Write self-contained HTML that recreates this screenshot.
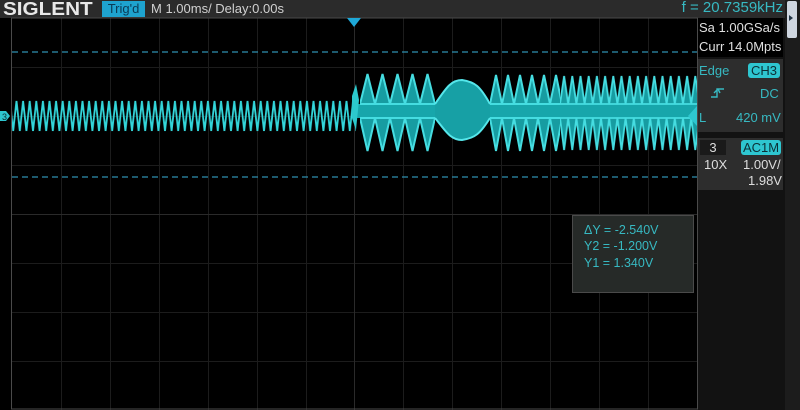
<!DOCTYPE html>
<html><head><style>
body{margin:0;width:800px;height:410px;background:#000;position:relative;overflow:hidden;font-family:"Liberation Sans",sans-serif}
div{position:absolute}
.t{white-space:nowrap}
</style></head><body>
<div style="left:0;top:0;width:800px;height:18px;background:#2b2b2b"></div>
<div class="t" style="left:3px;top:-1px;font-size:18px;font-weight:bold;color:#e8e8e8;letter-spacing:0px;transform:scaleX(1.15);transform-origin:left">SIGLENT</div>
<div class="t" style="left:102px;top:1px;width:43px;height:16px;background:#1ea3cf;color:#0a3a55;font-size:13px;line-height:16px;text-align:center">Trig'd</div>
<div class="t" style="left:151px;top:0px;font-size:13px;line-height:18px;color:#d0d0d0">M 1.00ms/ Delay:0.00s</div>
<div class="t" style="left:600px;width:183px;top:-1px;font-size:15px;line-height:18px;color:#37b9c2;text-align:right">f = 20.7359kHz</div>
<div style="left:697px;top:18px;width:103px;height:392px;background:#121212"></div>
<div style="left:785px;top:0;width:15px;height:410px;background:#1c1c1c"></div>
<div style="left:787px;top:1px;width:10px;height:37px;background:#cfd6e0;border-radius:2px"></div>
<div style="left:789px;top:15px;width:0;height:0;border-left:4px solid #234;border-top:3px solid transparent;border-bottom:3px solid transparent"></div>
<div style="left:697px;top:18px;width:86px;height:39px;background:#000"></div>
<div class="t" style="left:699px;top:20px;font-size:13px;color:#e0e0e0">Sa 1.00GSa/s</div>
<div class="t" style="left:699px;top:39px;font-size:13px;color:#e0e0e0">Curr 14.0Mpts</div>
<div style="left:697px;top:59px;width:86px;height:73px;background:#2d2d2d"></div>
<div class="t" style="left:699px;top:63px;font-size:13px;color:#37b9c2">Edge</div>
<div class="t" style="left:748px;top:63px;width:32px;height:15px;background:#2ec6d0;border-radius:3px;color:#0c3036;font-size:13px;line-height:15px;text-align:center">CH3</div>
<svg style="position:absolute;left:710px;top:86px" width="16" height="14"><path d="M1,11 H7 V3 H14 M4,7 L8,3 M8,3 L10,7" stroke="#37b9c2" stroke-width="1.4" fill="none"/></svg>
<div class="t" style="left:760px;top:86px;font-size:13px;color:#37b9c2">DC</div>
<div class="t" style="left:699px;top:110px;font-size:13px;color:#37b9c2">L</div>
<div class="t" style="left:736px;top:110px;font-size:13px;color:#37b9c2">420 mV</div>
<div style="left:697px;top:138px;width:86px;height:52px;background:#2d2d2d"></div>
<div class="t" style="left:700px;top:140px;width:26px;height:15px;background:#1a1a1a;color:#ddd;font-size:13px;line-height:15px;text-align:center">3</div>
<div class="t" style="left:741px;top:140px;width:40px;height:15px;background:#2ec6d0;border-radius:3px;color:#0c3036;font-size:13px;line-height:15px;text-align:center">AC1M</div>
<div class="t" style="left:704px;top:157px;font-size:13px;color:#ddd">10X</div>
<div class="t" style="left:743px;top:157px;font-size:13px;color:#ddd">1.00V/</div>
<div class="t" style="left:748px;top:173px;font-size:13px;color:#ddd">1.98V</div>
<svg style="position:absolute;left:0;top:0" width="800" height="410">
<defs>
<pattern id="lp" width="6.6" height="410" patternUnits="userSpaceOnUse"><path d="M0,131 L3.3,101 L6.6,131" stroke="#33d6da" stroke-width="1.8" fill="none"/></pattern>
<pattern id="p15" x="360" width="15" height="410" patternUnits="userSpaceOnUse"><path d="M0,104 L7.5,74 L15,104Z M0,118 L7.5,151 L15,118Z" fill="#179ca1" stroke="#45dde1" stroke-width="2"/></pattern>
<pattern id="p12" x="490" width="12" height="410" patternUnits="userSpaceOnUse"><path d="M0,104 L6,75 L12,104Z M0,118 L6,151 L12,118Z" fill="#179ca1" stroke="#45dde1" stroke-width="2"/></pattern>
<pattern id="p8" x="560" width="8.2" height="410" patternUnits="userSpaceOnUse"><path d="M0,104 L4.1,76 L8.2,104Z M0,118 L4.1,150 L8.2,118Z" fill="#179ca1" stroke="#45dde1" stroke-width="1.8"/></pattern>
</defs>
<g stroke="#1c1c1c" stroke-width="1">
<path d="M61.5,18V410M110.5,18V410M159.5,18V410M208.5,18V410M257.5,18V410M306.5,18V410M403.5,18V410M452.5,18V410M501.5,18V410M550.5,18V410M599.5,18V410M648.5,18V410"/>
<path d="M12,67.5H697M12,116.5H697M12,165.5H697M12,263.5H697M12,312.5H697M12,361.5H697"/>
</g>
<path d="M354.5,18V410M12,214.5H697" stroke="#2a2a2a"/>
<rect x="11.5" y="18" width="686" height="391" fill="none" stroke="#4a4a4a"/>
<rect x="12" y="98" width="344" height="36" fill="url(#lp)"/>
<rect x="356" y="104" width="341" height="14" fill="#17a6ab"/>
<rect x="360" y="70" width="75" height="85" fill="url(#p15)"/>
<path d="M435,104 C445,90 450,80 462,80 C475,82 480,86 490,104 V118 C480,134 475,138 462,140 C450,140 445,130 435,118Z" fill="#17a0a5"/>
<path d="M435,104 C445,90 450,80 462,80 C475,82 480,86 490,104 M435,118 C445,130 450,140 462,140 C475,138 480,134 490,118" stroke="#55e6ea" stroke-width="2" fill="none"/>
<rect x="490" y="70" width="70" height="85" fill="url(#p12)"/>
<rect x="560" y="70" width="137" height="85" fill="url(#p8)"/>
<path d="M352,96 L356,84 L359,100 L356,130 L352,118Z" fill="#2cc8cc"/>
<line x1="12" y1="52" x2="697" y2="52" stroke="#2f8fb0" stroke-width="1.2" stroke-dasharray="6,4"/>
<line x1="12" y1="177" x2="697" y2="177" stroke="#2f8fb0" stroke-width="1.2" stroke-dasharray="6,4"/>
<path d="M347,18 H361 L354,27Z" fill="#1ea8d8"/>
<path d="M0,111 H6 L10,116 L6,121 H0Z" fill="#2ec6d0"/>
<text x="2" y="120" font-size="9" fill="#0c3036" font-family="Liberation Sans">3</text>
<path d="M697,106 L688,116 L697,126Z" fill="#2ec6d0"/>
<rect x="572.5" y="215.5" width="121" height="77" fill="#262a28" stroke="#4a4a4a"/>
<text x="584" y="234" font-size="12.5" fill="#37b9c2" font-family="Liberation Sans">ΔY = -2.540V</text>
<text x="584" y="250" font-size="12.5" fill="#37b9c2" font-family="Liberation Sans">Y2 = -1.200V</text>
<text x="584" y="267" font-size="12.5" fill="#37b9c2" font-family="Liberation Sans">Y1 = 1.340V</text>
</svg>
</body></html>
